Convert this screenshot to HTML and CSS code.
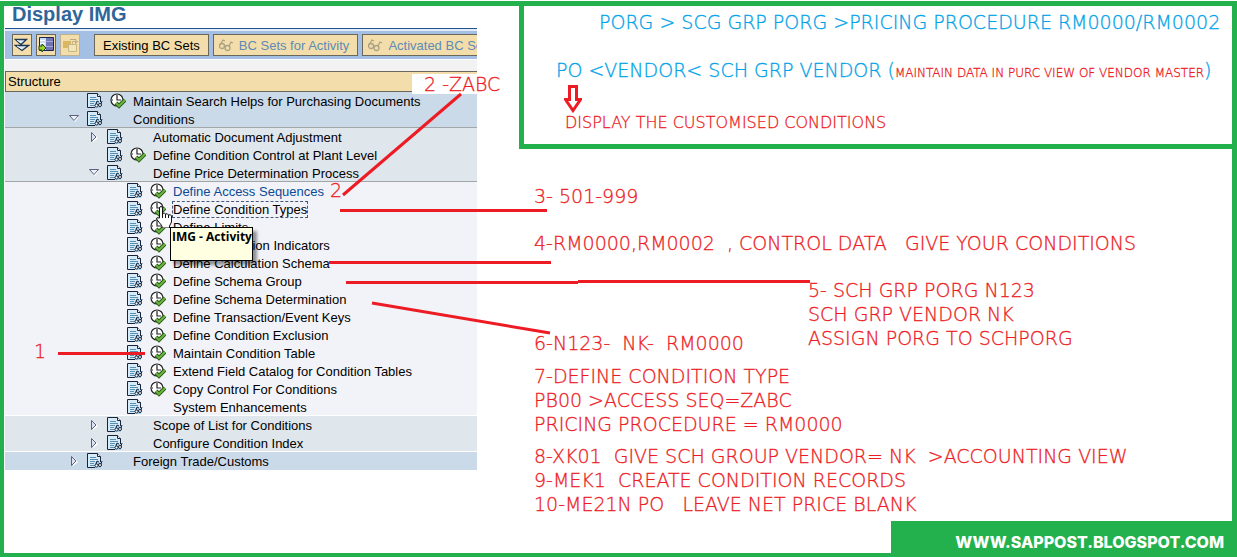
FILE: index.html
```html
<!DOCTYPE html>
<html lang="en">
<head>
    <meta charset="UTF-8">
    <meta name="viewport" content="width=device-width, initial-scale=1.0">
    <title>Display IMG</title>
    <link rel="stylesheet" href="styles.css">
</head>
<body>
    <svg class="symbols" aria-hidden="true">
        <symbol id="doc" viewBox="0 0 16 16">
            <path d="M.5.5h10l3 3v11H.5z" fill="#d6eaf7" stroke="#16233a"/>
            <path d="M10.5.5v3h3" fill="#fff" stroke="#16233a"/>
            <path d="M3 4.5h6M3 6.5h8M3 8.5h5M3 10.5h4M3 12.5h5" stroke="#5790b5"/>
            <path d="M8 9h6v6H8z" fill="#a9cde4"/>
            <circle cx="9.5" cy="12.5" r="1.5" fill="#fff" stroke="#13233b"/>
            <circle cx="13" cy="12" r="1.5" fill="#fff" stroke="#13233b"/>
            <path d="M9 11l1-3 2 1M14 11l1-3" fill="none" stroke="#13233b"/>
        </symbol>
        <symbol id="clock" viewBox="0 0 16 16">
            <circle cx="7" cy="7" r="6" fill="#fff" stroke="#222" stroke-width="1.2"/>
            <path d="M7 2v5h4M2 7h1M7 11v1" fill="none" stroke="#222" stroke-width="1.2"/>
            <path d="M6 10l3 3 6-6" fill="none" stroke="#245c12" stroke-width="4"/>
            <path d="M6 10l3 3 6-6" fill="none" stroke="#6db344" stroke-width="2"/>
        </symbol>
        <symbol id="open" viewBox="0 0 10 10">
            <path d="M2 3h8L6 8z" fill="#fff"/>
            <path d="M.5 1.500h9L5 6.500z" fill="#eef1fa" stroke="#59617f"/>
        </symbol>
        <symbol id="closed" viewBox="0 0 10 10">
            <path d="M4 1l5 5-5 4z" fill="#fff"/>
            <path d="M2.500.5L7 5 2.500 9.500z" fill="#dde3f3" stroke="#59617f"/>
        </symbol>
        <symbol id="glasses" viewBox="0 0 16 14">
            <g fill="none" stroke="#aba285" stroke-width="1.3">
                <circle cx="4" cy="8" r="2.500"/>
                <circle cx="9.500" cy="10" r="2.500"/>
                <path d="M2 7L5 2l2 1M11 8l2-4 2 1M6 8l2 1"/>
            </g>
        </symbol>
    </svg>

    <div class="frame">
        <div class="sap">
            <h1>Display IMG</h1>
            <div class="toolbar">
                <button class="tool" aria-label="Expand subtree">
                    <svg width="16" height="16" viewBox="0 0 16 16"><path d="M1.500 2.500h11L7 7.500zM1.500 8.500h13L8 13.500z" fill="#d9eaf8" stroke="#1b3550" stroke-width="1.300"/><path d="M3 3l4 3M3 9l5 3" stroke="#fff"/></svg>
                </button>
                <button class="tool" aria-label="Position">
                    <svg width="16" height="16" viewBox="0 0 16 16"><path d="M1.500.5h14v13H1.500z" fill="#c9def5" stroke="#1a2452"/><path d="M8 1h7v12H8z" fill="#6f74b4"/><path d="M8 4.500h7M8 9.500h7" stroke="#a7a7dc"/><path d="M2 3.500h5M2 6.500h5" stroke="#fff"/><path d="M1 9h3V7l4 4-4 4v-2H1z" fill="#9bd12b" stroke="#24440e"/></svg>
                </button>
                <button class="tool" aria-label="Copy structure" disabled>
                    <svg width="16" height="16" viewBox="0 0 16 16"><path d="M1 4h8v7H1z" fill="#dab760"/><path d="M6.500 7.500h8v7h-8zM10.500 7V4.500h3V7" fill="#f4e4b9" stroke="#c6b681"/><path d="M8 2.500h6v3M12 4l2 2 2-2" fill="none" stroke="#b7a985"/></svg>
                </button>
                <span class="separator"></span>
                <button class="action">Existing BC Sets</button>
                <button class="action" disabled><svg width="16" height="14"><use href="#glasses"/></svg>BC Sets for Activity</button>
                <button class="action" disabled><svg width="16" height="14"><use href="#glasses"/></svg>Activated BC Sets</button>
            </div>
            <h2>Structure</h2>
            <ul class="tree">
                <li class="row level1"><span class="arrow"></span><svg class="icon"><use href="#doc"/></svg><svg class="icon"><use href="#clock"/></svg><span>Maintain Search Helps for Purchasing Documents</span></li>
                <li class="row level1 last"><svg class="arrow"><use href="#open"/></svg><svg class="icon"><use href="#doc"/></svg><span class="icon"></span><span>Conditions</span></li>
                <li class="row level2"><svg class="arrow"><use href="#closed"/></svg><svg class="icon"><use href="#doc"/></svg><span class="icon"></span><span>Automatic Document Adjustment</span></li>
                <li class="row level2"><span class="arrow"></span><svg class="icon"><use href="#doc"/></svg><svg class="icon"><use href="#clock"/></svg><span>Define Condition Control at Plant Level</span></li>
                <li class="row level2 last"><svg class="arrow"><use href="#open"/></svg><svg class="icon"><use href="#doc"/></svg><span class="icon"></span><span>Define Price Determination Process</span></li>
                <li class="row level3"><span class="arrow"></span><svg class="icon"><use href="#doc"/></svg><svg class="icon"><use href="#clock"/></svg><span class="visited">Define Access Sequences</span></li>
                <li class="row level3"><span class="arrow"></span><svg class="icon"><use href="#doc"/></svg><svg class="icon"><use href="#clock"/></svg><span class="focused">Define Condition Types</span>
                    <svg class="pointer" width="18" height="22" viewBox="0 0 18 22"><path d="M4.500 12V2q0-1.500 1.500-1.500T7.500 2v5.500q2-1 3 .5 2-1 3 1 2.500-1 3 1v6l-2 4v2H7v-2l-5.500-7q-.5-2 3-1z" fill="#fff" stroke="#111"/><path d="M7.500 7v5M10.500 8v4M13.500 9v3" stroke="#111"/></svg>
                    <div class="tooltip">IMG - Activity</div>
                </li>
                <li class="row level3"><span class="arrow"></span><svg class="icon"><use href="#doc"/></svg><svg class="icon"><use href="#clock"/></svg><span>Define Limits</span></li>
                <li class="row level3"><span class="arrow"></span><svg class="icon"><use href="#doc"/></svg><svg class="icon"><use href="#clock"/></svg><span>Define Exclusion Indicators</span></li>
                <li class="row level3"><span class="arrow"></span><svg class="icon"><use href="#doc"/></svg><svg class="icon"><use href="#clock"/></svg><span>Define Calculation Schema</span></li>
                <li class="row level3"><span class="arrow"></span><svg class="icon"><use href="#doc"/></svg><svg class="icon"><use href="#clock"/></svg><span>Define Schema Group</span></li>
                <li class="row level3"><span class="arrow"></span><svg class="icon"><use href="#doc"/></svg><svg class="icon"><use href="#clock"/></svg><span>Define Schema Determination</span></li>
                <li class="row level3"><span class="arrow"></span><svg class="icon"><use href="#doc"/></svg><svg class="icon"><use href="#clock"/></svg><span>Define Transaction/Event Keys</span></li>
                <li class="row level3"><span class="arrow"></span><svg class="icon"><use href="#doc"/></svg><svg class="icon"><use href="#clock"/></svg><span>Define Condition Exclusion</span></li>
                <li class="row level3"><span class="arrow"></span><svg class="icon"><use href="#doc"/></svg><svg class="icon"><use href="#clock"/></svg><span>Maintain Condition Table</span></li>
                <li class="row level3"><span class="arrow"></span><svg class="icon"><use href="#doc"/></svg><svg class="icon"><use href="#clock"/></svg><span>Extend Field Catalog for Condition Tables</span></li>
                <li class="row level3"><span class="arrow"></span><svg class="icon"><use href="#doc"/></svg><svg class="icon"><use href="#clock"/></svg><span>Copy Control For Conditions</span></li>
                <li class="row level3 end"><span class="arrow"></span><svg class="icon"><use href="#doc"/></svg><span class="icon"></span><span>System Enhancements</span></li>
                <li class="row level2"><svg class="arrow"><use href="#closed"/></svg><svg class="icon"><use href="#doc"/></svg><span class="icon"></span><span>Scope of List for Conditions</span></li>
                <li class="row level2 end"><svg class="arrow"><use href="#closed"/></svg><svg class="icon"><use href="#doc"/></svg><span class="icon"></span><span>Configure Condition Index</span></li>
                <li class="row level1"><svg class="arrow"><use href="#closed"/></svg><svg class="icon"><use href="#doc"/></svg><span class="icon"></span><span>Foreign Trade/Customs</span></li>
            </ul>
        </div>

        <div class="side">
            <div class="summary">
                <p class="flow first">PORG &gt; SCG GRP PORG &gt;PRICING PROCEDURE RM0000/RM0002</p>
                <p class="flow">PO &lt;VENDOR&lt; SCH GRP VENDOR (<small>MAINTAIN DATA IN PURC VIEW OF VENDOR MASTER</small>)</p>
                <svg class="down" width="18" height="28" viewBox="0 0 18 28"><path d="M5.500 1.500h7v13h4L9 25.500 1.500 14.500h4z" fill="#fff" stroke="#ed1c24" stroke-width="3"/></svg>
                <p class="result">DISPLAY THE CUSTOMISED CONDITIONS</p>
            </div>
            <div class="notes">
                <p>3- 501-999</p>
                <p>4-RM0000,RM0002  , CONTROL DATA   GIVE YOUR CONDITIONS</p>
                <div class="pair">
                    <p>6-N123-  NK-  RM0000</p>
                    <p>5- SCH GRP PORG N123<br>SCH GRP VENDOR NK<br>ASSIGN PORG TO SCHPORG</p>
                </div>
                <p class="close">7-DEFINE CONDITION TYPE<br>PB00 &gt;ACCESS SEQ=ZABC<br>PRICING PROCEDURE = RM0000</p>
                <p class="close">8-XK01  GIVE SCH GROUP VENDOR= NK  &gt;ACCOUNTING VIEW<br>9-MEK1  CREATE CONDITION RECORDS<br>10-ME21N PO   LEAVE NET PRICE BLANK</p>
            </div>
            <a class="site" href="#">WWW.SAPPOST.BLOGSPOT.COM</a>
        </div>

        <!-- red callouts drawn over the tree -->
        <span class="mark zabc">2 -ZABC</span>
        <span class="mark two">2</span>
        <span class="mark one">1</span>
        <svg class="lines" width="820" height="380" viewBox="0 0 820 380" fill="none" stroke="#ed1c24" stroke-width="3">
            <path d="M461 94L343 195M340 210.500h207M329 262.500h222M346 282.500h232M578 281.500h232M372 303L550 333M58 353.500h87"/>
        </svg>
    </div>
</body>
</html>
```
FILE: styles.css
```css
* {
    box-sizing: border-box;
}
body {
    margin: 0;
    padding-top: 1px;
    background: #fff;
    font-family: "Liberation Sans", Arial, sans-serif;
}
h1, h2, p, ul {
    margin: 0;
    padding: 0;
}
.symbols {
    display: none;
}
.frame {
    position: relative;
    display: flex;
    min-height: calc(100vh - 1px);
    border: solid #22b14c;
    border-width: 5px 5px 4px 4px;
    overflow: hidden;
}

/* SAP window */
.sap {
    width: 473px;
    flex: none;
    align-self: flex-start;
    margin-left: 1px;
    margin-right: -1px;
    padding-right: 1px;
    background: #f2f2f2;
    background-clip: content-box;
}
h1 {
    height: 23px;
    border-bottom: 1px solid #1f5490;
    padding-left: 7px;
    font-size: 20px;
    line-height: 16px;
    color: #2f6699;
    background: #fff;
}
.toolbar {
    display: flex;
    align-items: center;
    gap: 4px;
    height: 31px;
    padding-left: 7px;
    border-top: 2px solid #e3ebf6;
    border-bottom: 1px solid #fff;
    background: #a3bfe4;
    overflow: hidden;
}
.toolbar button {
    display: flex;
    align-items: center;
    flex: none;
    height: 22px;
    border: 1px solid #6b675b;
    background: #f3deab;
    font-family: inherit;
    font-size: 13px;
    color: #000;
    white-space: nowrap;
}
.toolbar .tool {
    justify-content: center;
    width: 20px;
    padding: 0;
}
.toolbar .action {
    gap: 5px;
    padding: 0 8px;
}
.toolbar .tool:disabled {
    border-color: #bcb291;
}
.toolbar .action:disabled {
    padding: 0 8px 0 4px;
    color: #5f8ab5;
}
.separator {
    width: 2px;
    height: 20px;
    margin: 0 3px;
    background: #9099a8;
}
h2 {
    height: 21px;
    margin-top: 11px;
    padding-left: 2px;
    border: 1px solid #6b675b;
    border-right: 0;
    background: #f3deab;
    font-size: 13px;
    font-weight: normal;
    line-height: 20px;
}
.tree {
    list-style: none;
    font-size: 13px;
}
.row {
    position: relative;
    display: flex;
    align-items: center;
    height: 18px;
    white-space: nowrap;
}
.level1 {
    padding-left: 64px;
    background: #cbdae9;
}
.level2 {
    padding-left: 84px;
    background: #dfe6ec;
}
.level3 {
    padding-left: 104px;
    background: #f2f3f8;
}
.last {
    box-shadow: inset 0 -1px #a2a6a9;
}
.end {
    box-shadow: inset 0 -1px #fff;
}
.arrow {
    width: 10px;
    height: 10px;
    margin-right: 8px;
}
.icon {
    width: 16px;
    height: 16px;
    margin-right: 7px;
}
.visited {
    color: #0b4a94;
}
.focused {
    outline: 1px dashed #46597d;
}
.pointer {
    position: absolute;
    left: 150px;
    top: 6px;
    z-index: 2;
}
.tooltip {
    position: absolute;
    left: 165px;
    top: 27px;
    z-index: 3;
    width: 83px;
    height: 34px;
    padding-left: 1px;
    border: 1px solid #000;
    background: #ffffe1;
    box-shadow: 4px 4px 3px rgba(0, 0, 0, 0.4);
    font: bold 12px/18px "Open Sans", sans-serif;
}

/* explanations */
.side {
    display: flex;
    flex-direction: column;
    flex: 1;
    min-width: 0;
    padding-left: 42px;
}
.summary, .notes, .mark {
    font-family: "Bradley Hand ITC", "DejaVu Sans", cursive;
    font-size: 19px;
    font-weight: 200;
    line-height: 24px;
    color: #ed1c24;
    -webkit-text-stroke: 0.3px;
    white-space: pre;
}
.summary {
    display: flex;
    flex-direction: column;
    height: 143px;
    padding: 4px 0 0 32px;
    border: solid #22b14c;
    border-width: 0 0 5px 5px;
    white-space: nowrap;
}
.summary .flow {
    color: #00a2e8;
}
.summary .first {
    padding-left: 43px;
    margin-bottom: 24px;
}
.flow small {
    font-size: 12px;
    color: #ed1c24;
}
.down {
    margin-left: 8px;
}
.result {
    padding-left: 9px;
    font-size: 16px;
    line-height: 20px;
}
.notes {
    flex: 1;
    display: flex;
    flex-direction: column;
    gap: 23px;
    padding: 35px 0 0 15px;
    white-space: normal;
}
.notes p {
    white-space: pre;
}
.pair {
    display: grid;
    grid-template-columns: 274px 1fr;
    margin-bottom: 1px;
}
.pair p:first-child {
    padding-top: 53px;
}
.notes .close {
    margin-top: -15px;
}
.site {
    align-self: flex-end;
    height: 32px;
    padding: 12px 8px 0 64px;
    background: #22b14c;
    font: 800 16px/18px Inter, sans-serif;
    color: #fff;
    text-decoration: none;
}

.mark {
    position: absolute;
    line-height: 20px;
}
.zabc {
    left: 408px;
    top: 68px;
    padding: 0 8px 0 12px;
    background: #fff;
}
.two {
    left: 326px;
    top: 174px;
}
.one {
    left: 30px;
    top: 335px;
}
.lines {
    position: absolute;
    left: -4px;
    top: -6px;
    pointer-events: none;
}
```
